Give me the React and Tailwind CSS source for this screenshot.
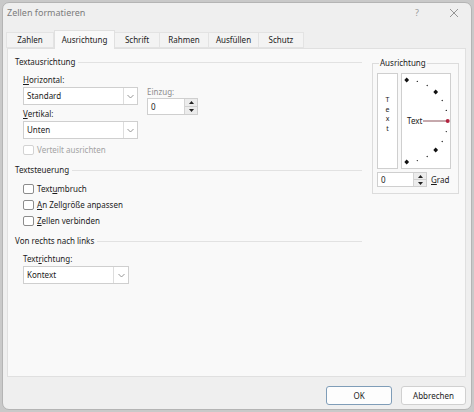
import React from "react";

// Small helpers for the dialog controls
const Chevron = () => (
  <svg width="7" height="5" viewBox="0 0 7 5">
    <polyline points="0.5,1 3.5,4 6.5,1" fill="none" stroke="#8a8a8a" strokeWidth="0.9" />
  </svg>
);

function Select({ value, width, btn }) {
  return (
    <div className={`flex h-[18px] bg-white border border-[#cfcfcf] ${width}`}>
      <div className="flex-1 flex items-center pl-[3px]">{value}</div>
      <div className={`flex items-center justify-center border-l border-[#dddddd] ${btn}`}>
        <Chevron />
      </div>
    </div>
  );
}

function Spin({ width, height }) {
  return (
    <div className={`flex bg-white border border-[#cfcfcf] ${width} ${height}`}>
      <div className="flex-1 flex items-center pl-[3px]">0</div>
      <div className="w-[13px] flex flex-col border-l border-[#d4d4d4] bg-[#ececec]">
        <div className="flex-1 flex items-center justify-center border-b border-[#d0d0d0]">
          <svg width="5" height="3" viewBox="0 0 5 3">
            <polygon points="0,3 2.5,0 5,3" fill="#222" />
          </svg>
        </div>
        <div className="flex-1 flex items-center justify-center">
          <svg width="5" height="3" viewBox="0 0 5 3">
            <polygon points="0,0 5,0 2.5,3" fill="#222" />
          </svg>
        </div>
      </div>
    </div>
  );
}

function Check({ children, disabled }) {
  return (
    <div className="flex items-center h-[12px]">
      <div
        className={`w-[11px] h-[10px] rounded-[2px] border bg-white ${
          disabled ? "border-[#d3d3d3]" : "border-[#8c8c8c]"
        }`}
      />
      <span className={`ml-[3px] ${disabled ? "text-[#a3a3a3]" : ""}`}>{children}</span>
    </div>
  );
}

function Section({ title }) {
  return (
    <div className="flex items-center h-[12px] gap-[3px]">
      <span>{title}</span>
      <div className="flex-1 h-px bg-[#e2e2e2]" />
    </div>
  );
}

function Dial() {
  const cx = 5.7;
  const cy = 48;
  const r = 41;
  const marks = [];
  for (let a = -90; a <= 90; a += 15) {
    const rad = (a * Math.PI) / 180;
    const x = cx + r * Math.cos(rad);
    const y = cy + r * Math.sin(rad);
    if (a === 0) {
      marks.push(<circle key={a} cx={x} cy={y} r="2" fill="#b2233f" />);
    } else if (a % 45 === 0) {
      marks.push(
        <polygon
          key={a}
          points={`${x},${y - 2.4} ${x + 2.4},${y} ${x},${y + 2.4} ${x - 2.4},${y}`}
          fill="#111"
        />
      );
    } else {
      marks.push(<circle key={a} cx={x} cy={y} r="0.7" fill="#222" />);
    }
  }
  return (
    <div className="w-[50px] h-[96px] bg-white border border-[#cfcfcf]">
      <svg width="48" height="94" viewBox="0 0 48 94" className="block">
        <g transform="translate(-1,-1)">
          <line x1="22" y1={cy} x2={cx + r} y2={cy} stroke="#6e2630" strokeWidth="0.8" />
          <text x="6" y={cy + 3} fontSize="8" fill="#222" fontFamily="Noto Sans, sans-serif">
            Text
          </text>
          {marks}
        </g>
      </svg>
    </div>
  );
}

const tabs = ["Zahlen", "Ausrichtung", "Schrift", "Rahmen", "Ausfüllen", "Schutz"];
const tabWidths = ["w-[48px]", "w-[61px]", "w-[46px]", "w-[50px]", "w-[51px]", "w-[46px]"];

export default function App() {
  return (
    <div className="w-[474px] h-[412px] bg-[#c9c9c9] p-[2px] font-['Noto_Sans',sans-serif] text-[8px] leading-[12px] text-[#1b1b1b]">
      <div className="h-full flex flex-col bg-[#efefef] border border-[#b4b4b4] rounded-[7px] overflow-hidden">
        {/* Title bar */}
        <div className="h-[20px] flex items-center pl-[4px] pr-[12px] text-[#7c7c7c] text-[9px]">
          <span className="flex-1">Zellen formatieren</span>
          <span className="mr-[30px] text-[#9a9a9a]">?</span>
          <svg width="10" height="10" viewBox="0 0 10 10">
            <path d="M1 1 L9 9 M9 1 L1 9" stroke="#8a8a8a" strokeWidth="0.9" />
          </svg>
        </div>

        {/* Tabs */}
        <div className="mt-[7px] ml-[4px] h-[18px] flex items-end">
          {tabs.map((t, i) =>
            i === 1 ? (
              <div
                key={t}
                className={`${tabWidths[i]} h-[19px] -mb-px z-10 flex items-center justify-center bg-[#f9f9f9] border border-b-0 border-[#e0e0e0]`}
              >
                {t}
              </div>
            ) : (
              <div
                key={t}
                className={`${tabWidths[i]} h-[16px] flex items-center justify-center bg-[#f3f3f3] border border-[#e3e3e3] -ml-px`}
              >
                {t}
              </div>
            )
          )}
        </div>

        {/* Panel */}
        <div className="ml-[4px] mr-[5px] h-[329px] bg-[#f9f9f9] border border-[#e0e0e0] flex pl-[7px] pr-[6px] pt-[7px]">
          {/* Left column */}
          <div className="w-[347px] flex flex-col">
            <Section title="Textausrichtung" />
            <div className="pl-[8px] flex">
              <div className="flex flex-col">
                <div className="mt-[6px]">
                  <u>H</u>orizontal:
                </div>
                <div className="mt-[1px]">
                  <Select value="Standard" width="w-[115px]" btn="w-[14px]" />
                </div>
                <div className="mt-[3px]">
                  <u>V</u>ertikal:
                </div>
                <div className="mt-[1px]">
                  <Select value="Unten" width="w-[115px]" btn="w-[14px]" />
                </div>
              </div>
              <div className="ml-[9px] pt-[18px] flex flex-col">
                <div className="text-[#8d8d8d]">Einzug:</div>
                <Spin width="w-[51px]" height="h-[17px]" />
              </div>
            </div>
            <div className="pl-[8px] mt-[5px]">
              <Check disabled>Verteilt ausrichten</Check>
            </div>

            <div className="mt-[8px]">
              <Section title="Textsteuerung" />
            </div>
            <div className="pl-[8px] mt-[7px] flex flex-col gap-[4px]">
              <Check>
                Text<u>u</u>mbruch
              </Check>
              <Check>
                <u>A</u>n Zellgröße anpassen
              </Check>
              <Check>
                <u>Z</u>ellen verbinden
              </Check>
            </div>

            <div className="mt-[8px]">
              <Section title="Von rechts nach links" />
            </div>
            <div className="pl-[8px] mt-[6px]">
              Text<u>r</u>ichtung:
            </div>
            <div className="pl-[8px] mt-[1px]">
              <Select value="Kontext" width="w-[106px]" btn="w-[15px]" />
            </div>
          </div>

          {/* Right column */}
          <div className="ml-[10px] mt-[1px]">
            <fieldset className="w-[87px] border border-[#dcdcdc] pl-[4px] pb-[6px]">
              <legend className="ml-[2px] px-[1px]">Ausrichtung</legend>
              <div className="mt-[4px] flex gap-[3px]">
                <div className="w-[21px] h-[96px] bg-white border border-[#cfcfcf] flex flex-col items-center pt-[21px] text-[7px] leading-[9.5px]">
                  <span>T</span>
                  <span>e</span>
                  <span>x</span>
                  <span>t</span>
                </div>
                <Dial />
              </div>
              <div className="mt-[3px] flex items-center">
                <Spin width="w-[50px]" height="h-[15px]" />
                <span className="ml-[4px]">
                  <u>G</u>rad
                </span>
              </div>
            </fieldset>
          </div>
        </div>

        {/* Footer */}
        <div className="flex justify-end gap-[9px] mr-[5px] pt-[9px]">
          <div className="w-[66px] h-[19px] flex items-center justify-center bg-[#fdfdfd] border border-[#7f9db8] rounded-[3px]">
            OK
          </div>
          <div className="w-[65px] h-[19px] flex items-center justify-center bg-[#fdfdfd] border border-[#d0d0d0] rounded-[3px]">
            Abbrechen
          </div>
        </div>
      </div>
    </div>
  );
}
